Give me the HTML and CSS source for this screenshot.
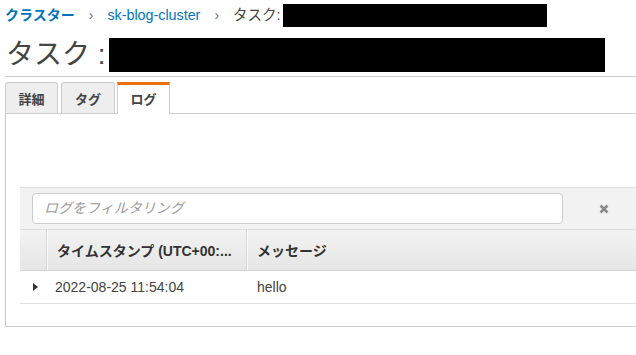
FILE: index.html
```html
<!DOCTYPE html>
<html lang="ja">
<head>
<meta charset="utf-8">
<title>タスク</title>
<link rel="stylesheet" href="styles.css">
</head>
<body>
<nav class="breadcrumb">
  <a class="crumb-link">クラスター</a>
  <span class="sep">›</span>
  <a class="crumb-plain-link">sk-blog-cluster</a>
  <span class="sep">›</span>
  <span class="crumb-current">タスク:</span>
  <span class="redact redact-crumb"></span>
</nav>
<h1 class="title">
  <span>タスク :</span>
  <span class="redact redact-title"></span>
</h1>
<div class="rule"></div>
<div class="tabs">
  <div class="tab tab-a">詳細</div>
  <div class="tab tab-b">タグ</div>
  <div class="tab tab-active">ログ</div>
</div>
<section class="panel">
  <div class="logs">
    <div class="filter">
      <div class="filter-input">ログをフィルタリング</div>
      <div class="clear">
        <svg width="10" height="10" viewBox="0 0 10 10"><path d="M1.5 1.5 L8.5 8.5 M8.5 1.5 L1.5 8.5" stroke="#8a8a8a" stroke-width="2.6" stroke-linecap="butt"/></svg>
      </div>
    </div>
    <div class="thead">
      <div class="cell c1"></div>
      <div class="cell c2 th">タイムスタンプ (UTC+00:...</div>
      <div class="cell c3 th">メッセージ</div>
    </div>
    <div class="trow">
      <div class="cell c1 caret-cell">
        <svg width="5" height="8" viewBox="0 0 5 8"><path d="M0 0 L5 4 L0 8 Z" fill="#333"/></svg>
      </div>
      <div class="cell c2 td">2022-08-25 11:54:04</div>
      <div class="cell c3 td">hello</div>
    </div>
  </div>
</section>
</body>
</html>
```
FILE: styles.css
```css
html, body {
  margin: 0;
  padding: 0;
  background: #fff;
  overflow: hidden;
}
body {
  width: 636px;
  height: 355px;
  font-family: "Liberation Sans", "Noto Sans CJK JP", sans-serif;
  color: #444;
}
.breadcrumb {
  display: flex;
  align-items: center;
  height: 23px;
  margin-top: 4px;
  padding-left: 5px;
  font-size: 14px;
  line-height: 23px;
}
.crumb-link {
  color: #0073bb;
  font-weight: bold;
}
.crumb-plain-link {
  color: #0073bb;
  font-size: 14.3px;
}
.sep {
  color: #687078;
  padding: 0 14px 0 14px;
}
.crumb-current {
  color: #444;
  font-size: 14.5px;
}
.redact {
  display: inline-block;
  background: #000;
}
.redact-crumb {
  width: 264px;
  height: 23px;
  margin-left: 2px;
}
.title {
  display: flex;
  align-items: center;
  height: 34px;
  margin: 11px 0 0 0;
  padding-left: 6px;
  font-size: 28px;
  font-weight: normal;
  color: #444;
  line-height: 34px;
}
.redact-title {
  width: 496px;
  height: 34px;
  margin-left: 3px;
}
.rule {
  margin: 4px 0 0 5px;
  border-top: 1px solid #ccc;
}
.tabs {
  display: flex;
  margin-top: 5px;
  padding-left: 5px;
  position: relative;
  z-index: 1;
}
.tab {
  box-sizing: border-box;
  height: 31px;
  border: 1px solid #ccc;
  border-bottom: none;
  border-radius: 3px 3px 0 0;
  background: #eee;
  font-size: 13px;
  font-weight: bold;
  color: #444;
  display: flex;
  align-items: center;
  justify-content: center;
}
.tab-a {
  width: 53px;
  margin-right: 3px;
}
.tab-b {
  width: 54px;
  margin-right: 2px;
}
.tab-active {
  width: 53px;
  height: 32px;
  margin-bottom: -1px;
  background: #fff;
  border-top: 3px solid #ec7211;
  border-radius: 0;
  padding-bottom: 2px;
}
.panel {
  box-sizing: border-box;
  width: 631px;
  margin-left: 5px;
  border: 1px solid #ccc;
  border-right: none;
  padding: 73px 0 22px 14px;
}
.logs {
  width: 616px;
}
.filter {
  display: flex;
  align-items: center;
  background: #f2f2f2;
  border-top: 1px solid #ddd;
  border-bottom: 1px solid #ddd;
  padding: 5px 0 5px 12px;
}
.filter-input {
  box-sizing: border-box;
  width: 531px;
  height: 31px;
  background: #fff;
  border: 1px solid #ccc;
  border-radius: 4px;
  padding-left: 11px;
  font-size: 14px;
  font-style: italic;
  color: #999;
  line-height: 29px;
}
.clear {
  flex: 1;
  display: flex;
  align-items: center;
  padding-left: 36px;
}
.thead {
  display: flex;
  height: 40px;
  background: linear-gradient(#f2f2f2, #e6e6e6);
  border-bottom: 1px solid #d6d6d6;
}
.trow {
  display: flex;
  height: 32px;
  border-bottom: 1px solid #ddd;
}
.cell {
  display: flex;
  align-items: center;
  box-sizing: border-box;
}
.c1 {
  width: 27px;
}
.thead .c1 {
  border-right: 1px solid #d6d6d6;
}
.c2 {
  width: 200px;
  padding-left: 9px;
}
.thead .c2 {
  border-left: 1px solid #fafafa;
  border-right: 1px solid #d6d6d6;
}
.c3 {
  flex: 1;
  padding-left: 9px;
}
.thead .c3 {
  border-left: 1px solid #fafafa;
}
.th {
  font-size: 14px;
  font-weight: bold;
  color: #333;
  white-space: nowrap;
}
.td {
  font-size: 14px;
  color: #444;
}
.caret-cell {
  padding-left: 13px;
}
.trow .c2 {
  padding-left: 8px;
}
.trow .c3 {
  padding-left: 10px;
}
```
